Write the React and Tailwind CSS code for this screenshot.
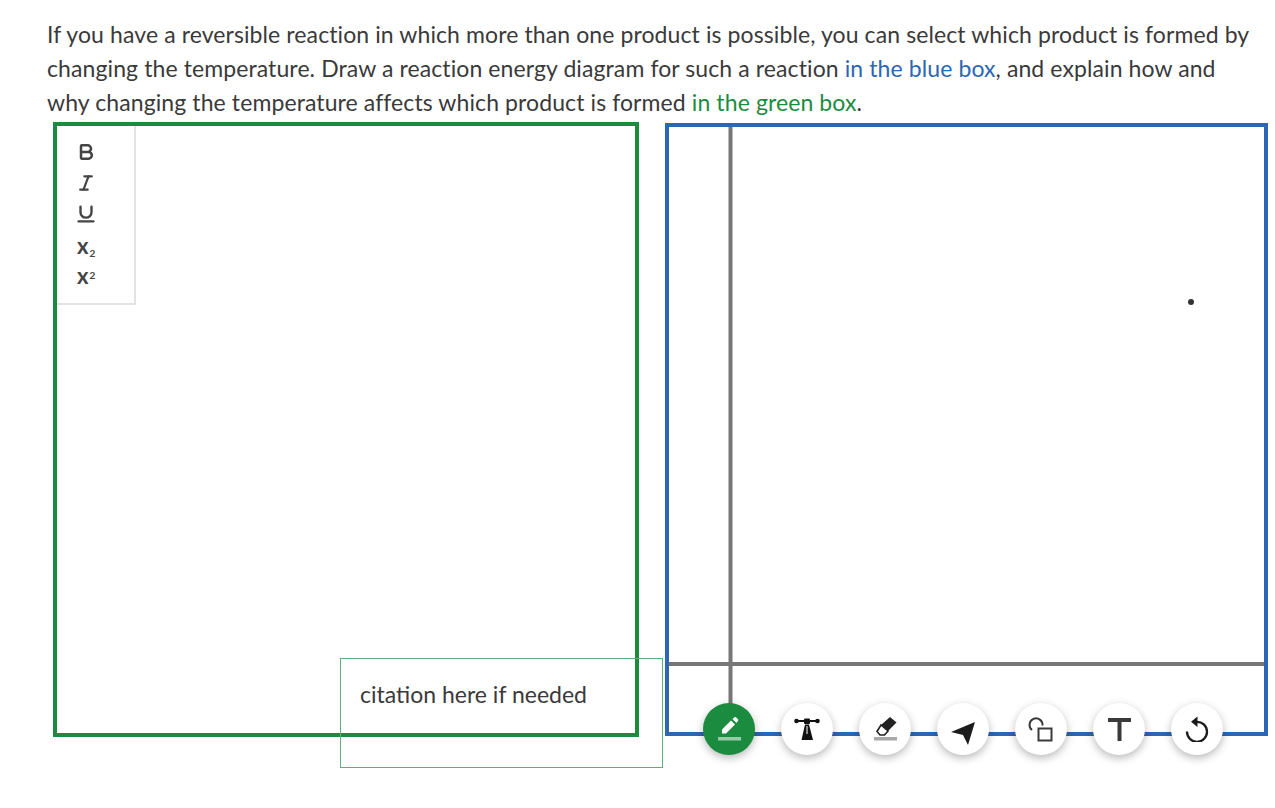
import { Bold, Italic, Underline } from "lucide-react";

const TOOL_BUTTON =
  "w-[52px] h-[52px] rounded-full flex items-center justify-center shrink-0 shadow-[0_3px_8px_rgba(0,0,0,0.28)]";

function PenIcon() {
  return (
    <svg width="28" height="28" viewBox="0 0 28 28" fill="#fff">
      <path d="M7 18.5V14.5L16 5.5L20 9.5L11 18.5Z" />
      <path d="M17.5 4L19.5 2.2C19.9 1.8 20.5 1.8 20.9 2.2L23 4.3C23.4 4.7 23.4 5.3 23 5.7L21.5 8Z" />
      <rect x="3" y="22" width="23" height="3.5" opacity="0.55" />
    </svg>
  );
}

function BezierIcon() {
  return (
    <svg width="26" height="26" viewBox="0 0 26 26" fill="#111">
      <rect x="1" y="4" width="24" height="2" />
      <circle cx="2.5" cy="5" r="2.3" />
      <circle cx="23.5" cy="5" r="2.3" />
      <rect x="10" y="2.5" width="6" height="5.5" rx="1" />
      <path d="M11 8.5H15L19 24H7.5L11 8.5Z" />
      <path d="M13 10V18" stroke="#fff" strokeWidth="1" />
    </svg>
  );
}

function EraserIcon() {
  return (
    <svg width="28" height="28" viewBox="0 0 28 28">
      <path d="M19 2L25.5 7.5L17 16L10 10Z" fill="#222" />
      <path d="M10 10L17 16L13.5 20H9L6 16.5Z" fill="#fff" stroke="#222" strokeWidth="1.6" />
      <rect x="3" y="22" width="23" height="3.5" fill="#a8a8a8" />
    </svg>
  );
}

function ArrowIcon() {
  return (
    <svg width="32" height="32" viewBox="0 0 32 32" fill="#1c1c1c">
      <path d="M28 9L4 19L16 22L21 32Z" />
    </svg>
  );
}

function ShapesIcon() {
  return (
    <svg width="26" height="26" viewBox="0 0 26 26" fill="none" stroke="#3a3a3a" strokeWidth="2">
      <path d="M4 14A6.5 6.5 0 1 1 14.5 9.5" />
      <rect x="10.5" y="12.5" width="13" height="12" />
    </svg>
  );
}

function TextIcon() {
  return (
    <svg width="26" height="26" viewBox="0 0 26 26" fill="#3a3a3a">
      <path d="M2 2H25V6H15.5V25H11.5V6H2Z" />
    </svg>
  );
}

function UndoIcon() {
  return (
    <svg width="26" height="26" viewBox="0 0 26 26" fill="none" stroke="#1c1c1c" strokeWidth="2.3">
      <path d="M12.5 5.8A10 10 0 1 1 3 15.5" />
      <path d="M13.5 0.5L7 5.8L13.5 11Z" fill="#1c1c1c" stroke="none" />
    </svg>
  );
}

function FormatBar() {
  return (
    <div className="w-[79px] h-[179px] border-r-2 border-b-2 border-[#e3e3e3] flex flex-col items-start pl-[19px] pt-[16px] text-[#444]">
      <Bold size={20} strokeWidth={3} className="mb-[11px]" />
      <Italic size={20} strokeWidth={2.6} className="mb-[10px]" />
      <Underline size={22} strokeWidth={2.6} className="mb-[10px] -ml-[1px]" />
      <span className="text-[22px] leading-[30px] font-bold ml-[1px] -mt-[4px]">
        x<sub className="text-[10px] ml-[1px]">2</sub>
      </span>
      <span className="text-[22px] leading-[30px] font-bold ml-[1px]">
        x<sup className="text-[10px] ml-[1px]">2</sup>
      </span>
    </div>
  );
}

export default function App() {
  const tools = [
    <BezierIcon key="bezier" />,
    <EraserIcon key="eraser" />,
    <ArrowIcon key="arrow" />,
    <ShapesIcon key="shapes" />,
    <TextIcon key="text" />,
    <UndoIcon key="undo" />,
  ];

  return (
    <div className="relative w-[1275px] h-[808px] bg-white pt-[17px] pl-[47px] font-['Lato','Noto_Sans',sans-serif] text-[#3a3a3a]">
      <p className="w-[1210px] text-[23px] leading-[34px] tracking-[0.1px]">
        If you have a reversible reaction in which more than one product is possible, you can select which product is
        formed by changing the temperature. Draw a reaction energy diagram for such a reaction{" "}
        <span className="text-[#2e66b3]">in the blue box</span>, and explain how and why changing the temperature
        affects which product is formed <span className="text-[#1b8c3f]">in the green box</span>.
      </p>

      <div className="flex items-start ml-[6px] mt-[3px]">
        {/* Left box */}
        <div className="w-[586px] h-[615px] border-[4px] border-[#1b8c3f]">
          <FormatBar />
        </div>

        {/* Right box */}
        <div className="relative w-[603px] h-[613px] ml-[26px] mt-[1px] border-[4px] border-[#2e66b3]">
          <svg className="absolute inset-0 w-full h-full" viewBox="0 0 595 605">
            <path d="M61.5 0V580" stroke="#777" strokeWidth="4" fill="none" />
            <path d="M0 537H595" stroke="#777" strokeWidth="4" fill="none" />
            <circle cx="522" cy="175" r="3" fill="#333" />
          </svg>
        </div>
      </div>

      {/* Citation box */}
      <div className="absolute left-[340px] top-[658px] w-[323px] h-[110px] border border-[#62ad7c] px-[19px] pt-[18px] text-[23px] leading-[34px]">
        citation here if needed
      </div>

      {/* Drawing tools */}
      <div className="absolute left-[703px] top-[703px] flex gap-[26px]">
        <button className={`${TOOL_BUTTON} bg-[#1b8c3f]`}>
          <PenIcon />
        </button>
        {tools.map((icon) => (
          <button key={icon.key} className={`${TOOL_BUTTON} bg-white`}>
            {icon}
          </button>
        ))}
      </div>
    </div>
  );
}
